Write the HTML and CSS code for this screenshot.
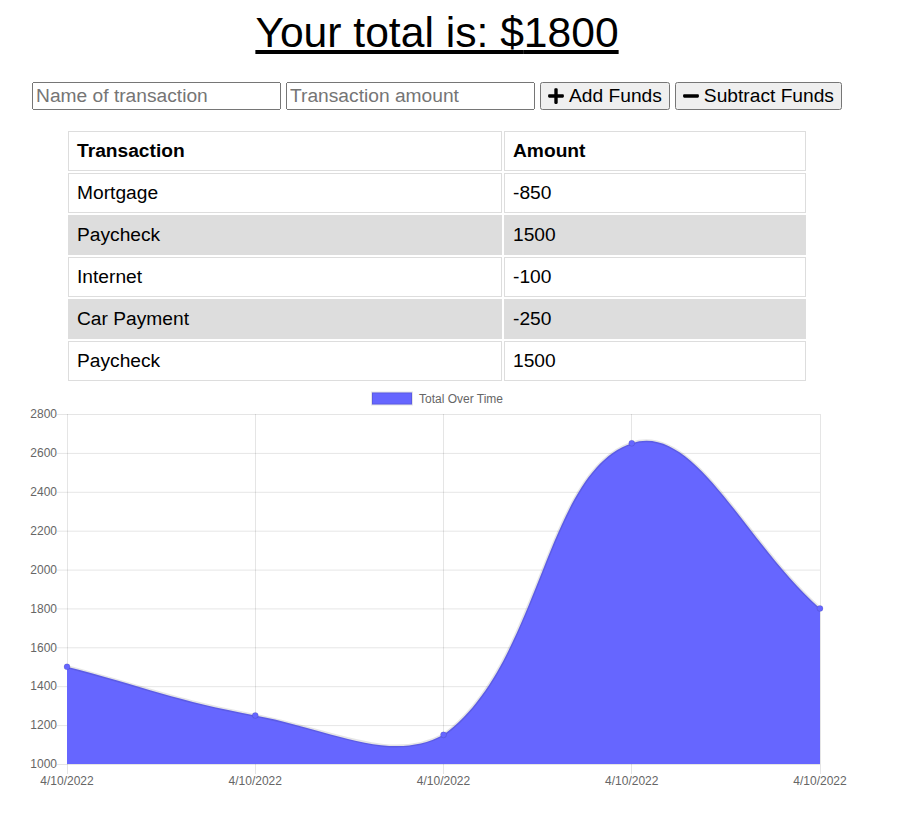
FILE: index.html
```html
<!DOCTYPE html>
<html lang="en">
<head>
    <meta charset="UTF-8" />
    <meta name="viewport" content="width=device-width, initial-scale=1.0" />
    <title>Budget Tracker</title>
    <link rel="stylesheet" href="styles.css">
</head>
<body>
    <div class="wrapper">

        <!-- total -->
        <div class="total">Your total is: $<span id="total">1800</span></div>

        <!-- form -->
        <div class="form">
            <input type="text" id="t-name" placeholder="Name of transaction" />
            <input type="number" min="0" id="t-amount" placeholder="Transaction amount" />
            <button id="add-btn">
                <svg class="icon" viewBox="0 0 448 512"><path d="M416 208H272V64c0-17.67-14.33-32-32-32h-32c-17.67 0-32 14.33-32 32v144H32c-17.67 0-32 14.33-32 32v32c0 17.67 14.33 32 32 32h144v144c0 17.67 14.33 32 32 32h32c17.67 0 32-14.33 32-32V304h144c17.67 0 32-14.33 32-32v-32c0-17.67-14.33-32-32-32z"/></svg>
                Add Funds
            </button>
            <button id="sub-btn">
                <svg class="icon" viewBox="0 0 448 512"><path d="M416 208H32c-17.67 0-32 14.33-32 32v32c0 17.67 14.33 32 32 32h384c17.67 0 32-14.33 32-32v-32c0-17.67-14.33-32-32-32z"/></svg>
                Subtract Funds
            </button>
        </div>

        <!-- transactions -->
        <table class="transactions">
            <thead>
                <tr><th class="col-name">Transaction</th><th>Amount</th></tr>
            </thead>
            <tbody id="tbody">
                <tr><td>Mortgage</td><td>-850</td></tr>
                <tr><td>Paycheck</td><td>1500</td></tr>
                <tr><td>Internet</td><td>-100</td></tr>
                <tr><td>Car Payment</td><td>-250</td></tr>
                <tr><td>Paycheck</td><td>1500</td></tr>
            </tbody>
        </table>

        <!-- chart -->
        <svg class="chart" width="874" height="430" viewBox="0 383 874 430">
            <!-- legend -->
            <rect x="372" y="392.5" width="40" height="12" fill="#6666ff" stroke="rgba(0,0,0,0.1)" stroke-width="2" />
            <text class="legend" x="419" y="403">Total Over Time</text>

            <!-- grid -->
            <g stroke="rgba(0,0,0,0.1)" stroke-width="1">
                <line x1="57" y1="414.5" x2="820" y2="414.5" />
                <line x1="57" y1="453.4" x2="820" y2="453.4" />
                <line x1="57" y1="492.3" x2="820" y2="492.3" />
                <line x1="57" y1="531.2" x2="820" y2="531.2" />
                <line x1="57" y1="570.1" x2="820" y2="570.1" />
                <line x1="57" y1="608.9" x2="820" y2="608.9" />
                <line x1="57" y1="647.8" x2="820" y2="647.8" />
                <line x1="57" y1="686.7" x2="820" y2="686.7" />
                <line x1="57" y1="725.6" x2="820" y2="725.6" />
                <line x1="57" y1="764.5" x2="820" y2="764.5" />
                <line x1="67.5" y1="414" x2="67.5" y2="774" />
                <line x1="255.5" y1="414" x2="255.5" y2="774" />
                <line x1="443.5" y1="414" x2="443.5" y2="774" />
                <line x1="631.5" y1="414" x2="631.5" y2="774" />
                <line x1="820.5" y1="414" x2="820.5" y2="774" />
            </g>

            <!-- y ticks -->
            <g class="tick" text-anchor="end">
                <text x="57" y="418">2800</text>
                <text x="57" y="457">2600</text>
                <text x="57" y="496">2400</text>
                <text x="57" y="535">2200</text>
                <text x="57" y="574">2000</text>
                <text x="57" y="613">1800</text>
                <text x="57" y="652">1600</text>
                <text x="57" y="690">1400</text>
                <text x="57" y="729">1200</text>
                <text x="57" y="768">1000</text>
            </g>

            <!-- x ticks -->
            <g class="tick" text-anchor="middle">
                <text x="67" y="785">4/10/2022</text>
                <text x="255.25" y="785">4/10/2022</text>
                <text x="443.5" y="785">4/10/2022</text>
                <text x="631.75" y="785">4/10/2022</text>
                <text x="820" y="785">4/10/2022</text>
            </g>

            <!-- data -->
            <path fill="#6666ff" d="M67,666.8 C142.3,686.24 178.93,701.62 255.25,715.4 C329.53,728.82 390.38,764 443.5,734.8 C540.98,664.33 544.29,472.56 631.75,443.2 C694.89,422 744.7,542.32 820,608.4 L820,764 L67,764 Z" />
            <path fill="none" stroke="rgba(0,0,0,0.1)" stroke-width="3" d="M67,666.8 C142.3,686.24 178.93,701.62 255.25,715.4 C329.53,728.82 390.38,764 443.5,734.8 C540.98,664.33 544.29,472.56 631.75,443.2 C694.89,422 744.7,542.32 820,608.4" />
            <g fill="#6666ff" stroke="rgba(0,0,0,0.1)" stroke-width="1">
                <circle cx="67" cy="666.8" r="3" />
                <circle cx="255.25" cy="715.4" r="3" />
                <circle cx="443.5" cy="734.8" r="3" />
                <circle cx="631.75" cy="443.2" r="3" />
                <circle cx="820" cy="608.4" r="3" />
            </g>
        </svg>

    </div>
</body>
</html>
```

FILE: styles.css
```css
/* page */
body {
    margin: 0;
    font-size: 120%;
    font-family: "Liberation Sans", Arial, Helvetica, sans-serif;
    overflow: hidden;
}

.wrapper {
    width: 874px;
    padding-top: 8px;
    text-align: center;
}

/* total */
.total {
    font-size: 2.22em;
    text-decoration: underline;
}

/* form */
.form {
    margin-top: 25px;
    display: flex;
    justify-content: center;
    gap: 5px;
}

.form input {
    box-sizing: border-box;
    width: 249px;
    height: 28px;
    font: inherit;
}

.form button {
    height: 28px;
    font: inherit;
    display: flex;
    align-items: center;
    gap: 5px;
}

.icon {
    width: 16px;
    height: 18px;
    fill: #000;
}

/* transactions */
.transactions {
    width: 742px;
    margin: 19px auto 0;
    border-spacing: 2px;
    table-layout: fixed;
    text-align: left;
}

.transactions th,
.transactions td {
    padding: 8px;
    border: 1px solid #ddd;
}

.col-name {
    box-sizing: border-box;
    width: 434px;
}

.transactions tbody tr:nth-child(even) td {
    background-color: #dddddd;
}

/* chart */
.chart {
    display: block;
}

.chart text {
    font-family: "Liberation Sans", Arial, Helvetica, sans-serif;
    font-size: 12px;
    fill: #666;
}
```
